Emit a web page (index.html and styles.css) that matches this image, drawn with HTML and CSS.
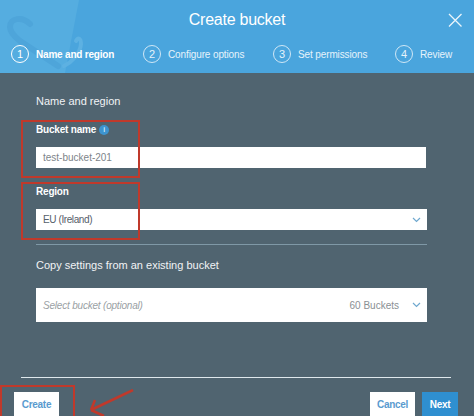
FILE: index.html
```html
<!DOCTYPE html>
<html lang="en">
<head>
<meta charset="utf-8">
<title>Create bucket</title>
<link rel="stylesheet" href="styles.css">
</head>
<body>
<div class="dialog">
  <header class="header">
    <svg class="header-art" width="110" height="73" viewBox="0 0 110 73" aria-hidden="true">
      <path class="art-light" d="M0 0H79L65 73H0Z"/>
      <path class="art-stroke" d="M30 24C22 16 10 18 10 27C10 32 15 37 20 41L58 66"/>
      <path class="art-stroke art-thin" d="M64 66C72 62 80 54 81 44C81 38 78 37 76 41"/>
    </svg>
    <h1 class="title">Create bucket</h1>
    <svg class="close" width="16" height="16" viewBox="0 0 16 16" aria-hidden="true">
      <path d="M2 2L14.500 14.500M14.500 2L2 14.500"/>
    </svg>
    <ol class="steps">
      <li class="step step-active"><span class="num">1</span>Name and region</li>
      <li class="step"><span class="num">2</span>Configure options</li>
      <li class="step"><span class="num">3</span>Set permissions</li>
      <li class="step"><span class="num">4</span>Review</li>
    </ol>
  </header>

  <main class="content">
    <h2 class="section">Name and region</h2>
    <div class="label label-name">Bucket name <span class="info">i</span></div>
    <div class="field field-name">test-bucket-201</div>
    <div class="label label-region">Region</div>
    <div class="field field-region">EU (Ireland)
      <svg class="chev" width="9" height="6" viewBox="0 0 9 6" aria-hidden="true"><path d="M1 1L4.500 4.500L8 1"/></svg>
    </div>
    <div class="divider"></div>
    <h2 class="section section-copy">Copy settings from an existing bucket</h2>
    <div class="field field-tall">
      <em class="placeholder">Select bucket (optional)</em>
      <span class="count">60 Buckets</span>
      <svg class="chev" width="9" height="6" viewBox="0 0 9 6" aria-hidden="true"><path d="M1 1L4.500 4.500L8 1"/></svg>
    </div>
  </main>

  <footer class="footer">
    <button class="btn btn-create">Create</button>
    <div class="footer-right">
      <button class="btn">Cancel</button>
      <button class="btn btn-next">Next</button>
    </div>
  </footer>
</div>

<div class="mark mark-name"></div>
<div class="mark mark-region"></div>
<div class="mark mark-create"></div>
<svg class="arrow" width="60" height="30" viewBox="0 0 60 30" aria-hidden="true">
  <path d="M44 1L2 21M2 21L15 27M2 21L6 11"/>
</svg>
</body>
</html>
```
FILE: styles.css
```css
* { box-sizing: border-box; }
html, body { margin: 0; padding: 0; }
body {
  width: 474px;
  height: 416px;
  overflow: hidden;
  position: relative;
  font-family: "Liberation Sans", Arial, sans-serif;
  background: #506470;
}
.dialog { display: flex; flex-direction: column; height: 416px; }

.header {
  position: relative;
  height: 73px;
  background: #4aa5dd;
  color: #fff;
  overflow: hidden;
  flex: none;
}
.header-art { position: absolute; left: 0; top: 0; }
.art-light { fill: #55ade0; }
.art-stroke { fill: none; stroke: #4ea5da; stroke-width: 6; stroke-linecap: round; }
.art-thin { stroke: #5db1e2; stroke-width: 4; }
.title {
  position: relative;
  margin: 0;
  padding-top: 11px;
  text-align: center;
  font-size: 16px;
  letter-spacing: -0.25px;
  line-height: 18px;
  font-weight: 400;
}
.close { position: absolute; left: 447px; top: 12px; }
.close path { fill: none; stroke: #eaf5fb; stroke-width: 1.300; }
.steps {
  position: relative;
  list-style: none;
  margin: 0;
  padding: 16px 0 0 11px;
  display: flex;
  font-size: 10px;
  letter-spacing: -0.12px;
  color: #e6f3fb;
}
.step { display: flex; align-items: center; gap: 7px; height: 18px; white-space: nowrap; }
.step:nth-child(1) { width: 132px; }
.step:nth-child(2) { width: 130px; }
.step:nth-child(3) { width: 122px; }
.num {
  width: 18px;
  height: 18px;
  border: 1px solid #cfe7f6;
  border-radius: 50%;
  display: flex;
  align-items: center;
  justify-content: center;
  font-size: 11px;
}
.step-active { font-weight: 700; letter-spacing: -0.2px; color: #fff; }
.step-active .num { border: 1.500px solid #fff; font-weight: 400; }

.content { padding: 0 47px 0 36px; flex: 1; color: #fff; }
.section {
  margin: 0;
  padding-top: 21px;
  font-size: 11px;
  line-height: 14px;
  font-weight: 400;
  color: #f0f3f5;
}
.label {
  font-size: 10px;
  letter-spacing: -0.2px;
  line-height: 12px;
  font-weight: 700;
  display: flex;
  align-items: center;
  gap: 3px;
}
.label-name { margin-top: 16px; }
.label-region { margin-top: 18px; }
.info {
  width: 10px;
  height: 10px;
  border-radius: 50%;
  background: #3d94cf;
  color: #cfe7f6;
  font-size: 7px;
  line-height: 10px;
  text-align: center;
}
.field {
  margin-top: 11px;
  height: 21px;
  background: #fff;
  display: flex;
  align-items: center;
  padding: 0 6px 0 7px;
  font-size: 10px;
  color: #55606a;
}
.field-name { margin-right: 1px; color: #7d8489; }
.field-region { letter-spacing: -0.4px; }
.chev { margin-left: auto; flex: none; }
.chev path { fill: none; stroke: #6fa8cf; stroke-width: 1.200; }
.divider { margin-top: 14px; height: 1px; background: #7f98a6; }
.section-copy { padding-top: 13px; }
.field-tall { margin-top: 16px; height: 34px; }
.placeholder { color: #9a9fa4; letter-spacing: -0.2px; }
.count { margin-left: auto; color: #8a8f94; }
.field-tall .chev { margin-left: 13px; }

.footer {
  flex: none;
  margin: 0 16px 0 14px;
  height: 24px;
  display: flex;
  justify-content: space-between;
  align-items: flex-start;
  position: relative;
}
.footer::before {
  content: "";
  position: absolute;
  left: 7px;
  right: 7px;
  top: -15px;
  height: 1px;
  background: #dfe8ec;
}
.footer-right { display: flex; gap: 7px; }
.btn {
  height: 24px;
  width: 45px;
  border: 0;
  padding: 0;
  background: #fff;
  color: #5a9bcf;
  font-family: inherit;
  font-size: 10px;
  letter-spacing: -0.3px;
  font-weight: 700;
}
.btn-next { width: 36px; background: #2f8fd0; color: #fff; }

.mark { position: absolute; border: 2.500px solid #c0392b; }
.mark-name { left: 21px; top: 120px; width: 119px; height: 58px; }
.mark-region { left: 21px; top: 182px; width: 119px; height: 58px; }
.mark-create { left: 0; top: 385px; width: 75px; height: 40px; }
.arrow { position: absolute; left: 89px; top: 389px; }
.arrow path { fill: none; stroke: #c0392b; stroke-width: 2.500; }
```
